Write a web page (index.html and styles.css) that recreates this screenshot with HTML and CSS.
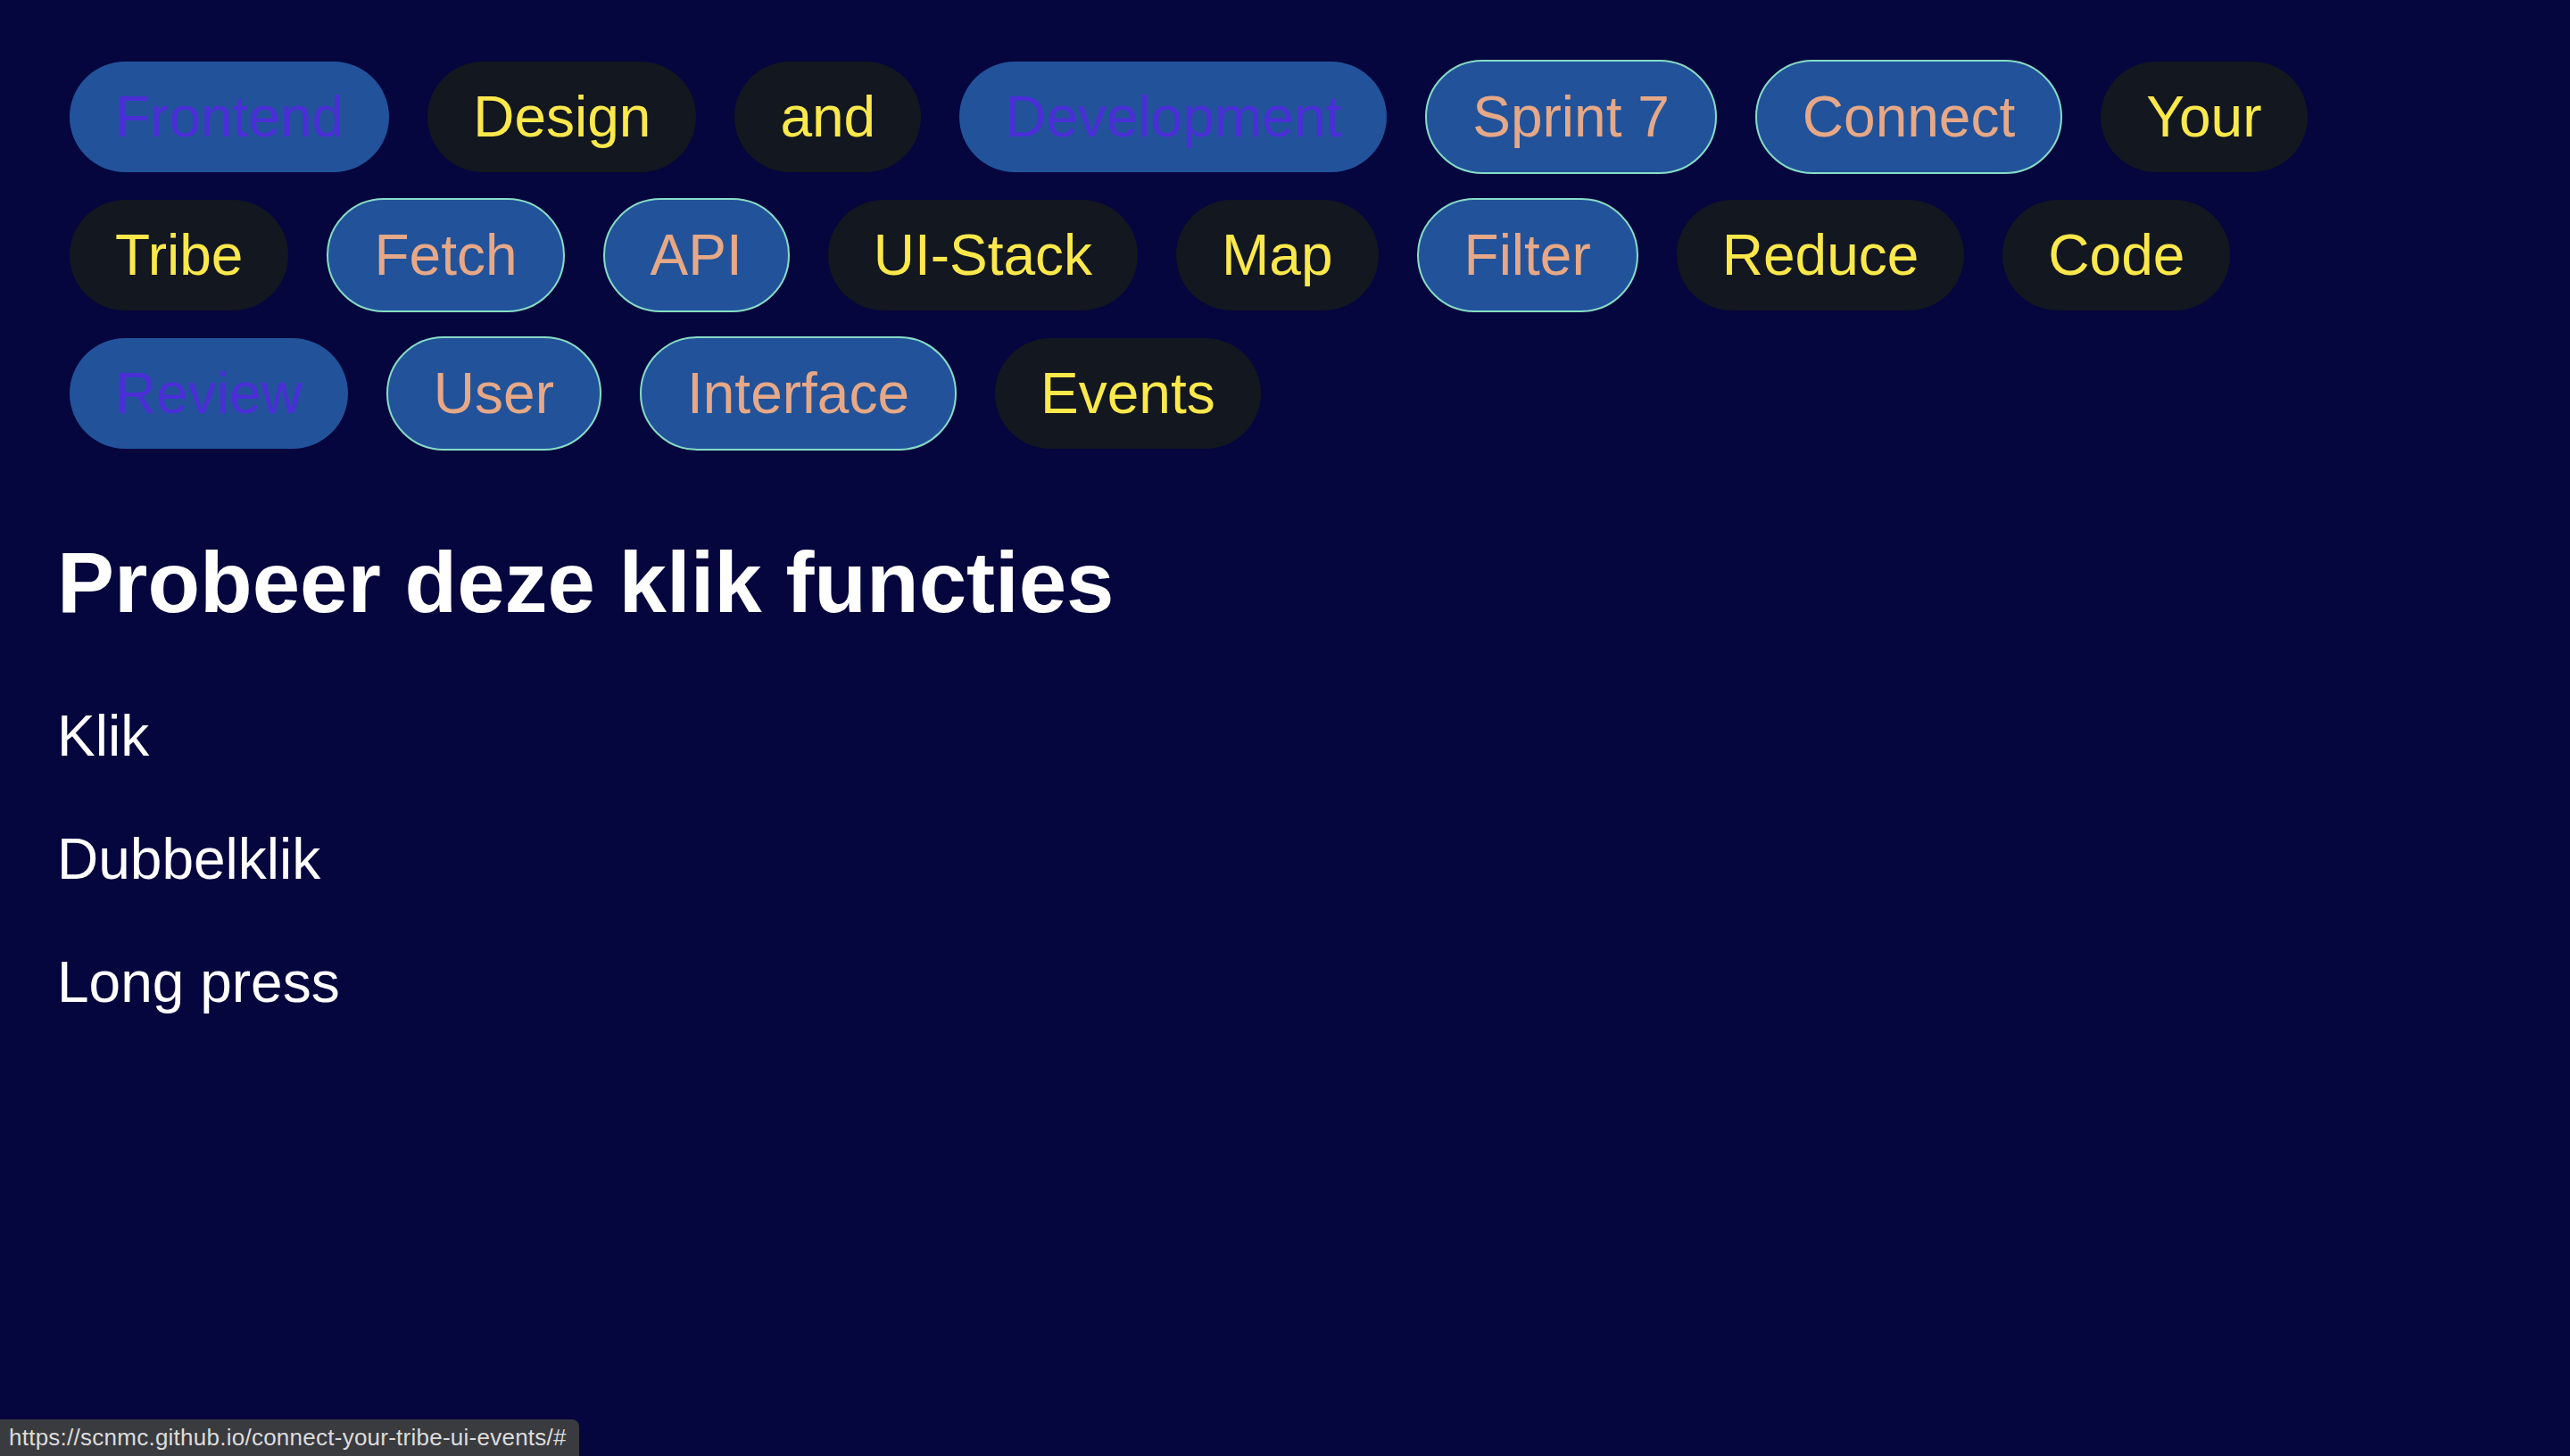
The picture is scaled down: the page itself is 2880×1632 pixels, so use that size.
FILE: index.html
```html
<!DOCTYPE html>
<html lang="nl">
<head>
<meta charset="utf-8">
<title>Connect your tribe – UI events</title>
<link rel="stylesheet" href="styles.css">
</head>
<body>
<main class="page">
  <ul class="tags">
    <li class="tag tag--blue">Frontend</li>
    <li class="tag tag--dark">Design</li>
    <li class="tag tag--dark">and</li>
    <li class="tag tag--blue">Development</li>
    <li class="tag tag--outline">Sprint 7</li>
    <li class="tag tag--outline">Connect</li>
    <li class="tag tag--dark">Your</li>
    <li class="tag tag--dark">Tribe</li>
    <li class="tag tag--outline">Fetch</li>
    <li class="tag tag--outline">API</li>
    <li class="tag tag--dark">UI-Stack</li>
    <li class="tag tag--dark">Map</li>
    <li class="tag tag--outline">Filter</li>
    <li class="tag tag--dark">Reduce</li>
    <li class="tag tag--dark">Code</li>
    <li class="tag tag--blue">Review</li>
    <li class="tag tag--outline">User</li>
    <li class="tag tag--outline">Interface</li>
    <li class="tag tag--dark">Events</li>
  </ul>
  <h1 class="title">Probeer deze klik functies</h1>
  <p class="action">Klik</p>
  <p class="action">Dubbelklik</p>
  <p class="action">Long press</p>
</main>
<div class="status">https://scnmc.github.io/connect-your-tribe-ui-events/#</div>
</body>
</html>
```
FILE: styles.css
```css
html, body {
  margin: 0;
  padding: 0;
  background: #05063e;
  min-height: 100%;
}

body {
  font-family: "Liberation Sans", Arial, Helvetica, sans-serif;
  color: #ffffff;
  min-height: 1632px;
}

.page {
  padding: 0 64px;
}

.tags {
  list-style: none;
  margin: 67px 0 0 14px;
  padding: 0;
  display: flex;
  flex-wrap: wrap;
  align-items: center;
  column-gap: 43px;
  row-gap: 27px;
  max-width: 2740px;
}

.tag {
  font-size: 64px;
  line-height: 74px;
  padding: 25px 51px;
  border-radius: 62px;
  white-space: nowrap;
}

.tag--blue {
  background: #22539a;
  color: #4a2ed6;
}

.tag--dark {
  background: #13171f;
  color: #fbe84b;
}

.tag--outline {
  background: #22539a;
  color: #e6a886;
  border: 2px solid #87dcc6;
  border-radius: 64px;
}

.title {
  font-size: 96px;
  font-weight: 700;
  line-height: 110px;
  margin: 93px 0 80px;
}

.action {
  font-size: 64px;
  line-height: 74px;
  margin: 64px 0;
}

.status {
  position: fixed;
  left: 0;
  bottom: 0;
  height: 41px;
  padding: 0 14px 0 10px;
  background: #3a3b3f;
  color: #dcdcdc;
  font-family: "Liberation Sans", Arial, sans-serif;
  font-size: 26px;
  letter-spacing: 0.25px;
  line-height: 41px;
  border-top-right-radius: 8px;
}
```
